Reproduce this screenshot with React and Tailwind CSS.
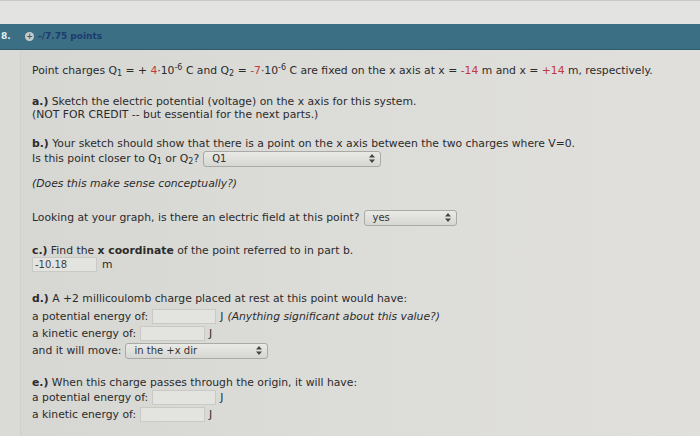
import React from 'react';

const font = { fontFamily: '"DejaVu Sans", Verdana, sans-serif' };

function Red({ children }) {
  return <span className="text-[#c0393b]">{children}</span>;
}

function Q({ n }) {
  return (
    <span>
      Q<sub className="text-[8px]">{n}</sub>
    </span>
  );
}

function Sup({ children }) {
  return <sup className="text-[8px]">{children}</sup>;
}

function Box({ w, value }) {
  return (
    <span
      className="inline-flex items-center h-[15px] border border-[#c9c9c5] bg-[#e3e3e0] px-[2px] text-[10px] text-[#444]"
      style={{ width: w }}
    >
      {value}
    </span>
  );
}

function Select({ w, value }) {
  return (
    <span
      className="inline-flex items-center justify-between h-[16px] rounded-[3px] border border-[#a9a9a6] bg-gradient-to-b from-[#e9e9e6] to-[#d6d6d3] pl-[8px] pr-[5px] text-[10px] text-[#333]"
      style={{ width: w }}
    >
      <span>{value}</span>
      <svg width="6" height="9" viewBox="0 0 6 9">
        <path d="M3 0 L6 3.5 L0 3.5 Z M3 9 L6 5.5 L0 5.5 Z" fill="#444" />
      </svg>
    </span>
  );
}

function Row({ children }) {
  return <div className="flex items-center h-[17px] gap-[4px]">{children}</div>;
}

export default function App() {
  return (
    <div
      className="w-[700px] h-[436px] overflow-hidden bg-gradient-to-r from-[#d6d6d3] via-[#dcdcd9] to-[#e0dfdc] text-[10.8px] leading-[13px] text-[#2b2b2b]"
      style={font}
    >
      <div className="h-[24px] bg-[#e3e3e1] border-t border-[#c8c8c6]" />
      <div className="h-[26px] bg-[#3b6f84] border-b border-[#2e5a6b] flex items-center text-[9px]">
        <span className="w-[20px] pl-[1px] text-[#e8eef0] font-bold">8.</span>
        <span className="ml-[5px] w-[9px] h-[9px] rounded-full bg-[#c9cdcf] flex items-center justify-center text-[#555] text-[8px] leading-none font-bold">
          +
        </span>
        <span className="ml-[4px] text-[#1c3a6e] font-bold">-/7.75 points</span>
      </div>
      <div className="flex">
        <div className="w-[21px] shrink-0 border-r border-[#cfcfcc] bg-[#dadad7] h-[386px]" />
        <div className="pl-[11px] pt-[14px]">
          <p>
            Point charges <Q n="1" /> = + <Red>4</Red>·10<Sup>-6</Sup> C and <Q n="2" /> ={' '}
            <Red>-7</Red>·10<Sup>-6</Sup> C are fixed on the x axis at x = <Red>-14</Red> m and x ={' '}
            <Red>+14</Red> m, respectively.
          </p>

          <div className="mt-[18px]">
            <p>
              <b>a.)</b> Sketch the electric potential (voltage) on the x axis for this system.
            </p>
            <p>(NOT FOR CREDIT -- but essential for the next parts.)</p>
          </div>

          <div className="mt-[16px]">
            <p>
              <b>b.)</b> Your sketch should show that there is a point on the x axis between the two
              charges where V=0.
            </p>
            <Row>
              <span>
                Is this point closer to <Q n="1" /> or <Q n="2" />?
              </span>
              <Select w="178px" value="Q1" />
            </Row>
            <p className="mt-[10px] italic">(Does this make sense conceptually?)</p>
          </div>

          <div className="mt-[19px]">
            <Row>
              <span>Looking at your graph, is there an electric field at this point?</span>
              <Select w="93px" value="yes" />
            </Row>
          </div>

          <div className="mt-[18px]">
            <p>
              <b>c.)</b> Find the <b>x coordinate</b> of the point referred to in part b.
            </p>
            <div className="flex items-center h-[15px] gap-[5px]">
              <Box w="65px" value="-10.18" />
              <span>m</span>
            </div>
          </div>

          <div className="mt-[20px]">
            <p>
              <b>d.)</b> A +2 millicoulomb charge placed at rest at this point would have:
            </p>
            <div className="mt-[3px]">
              <Row>
                <span>a potential energy of:</span>
                <Box w="64px" />
                <span>J</span>
                <span className="italic">(Anything significant about this value?)</span>
              </Row>
              <Row>
                <span>a kinetic energy of:</span>
                <Box w="65px" />
                <span>J</span>
              </Row>
              <Row>
                <span>and it will move:</span>
                <Select w="143px" value="in the +x dir" />
              </Row>
            </div>
          </div>

          <div className="mt-[17px]">
            <p>
              <b>e.)</b> When this charge passes through the origin, it will have:
            </p>
            <Row>
              <span>a potential energy of:</span>
              <Box w="64px" />
              <span>J</span>
            </Row>
            <Row>
              <span>a kinetic energy of:</span>
              <Box w="65px" />
              <span>J</span>
            </Row>
          </div>
        </div>
      </div>
    </div>
  );
}
